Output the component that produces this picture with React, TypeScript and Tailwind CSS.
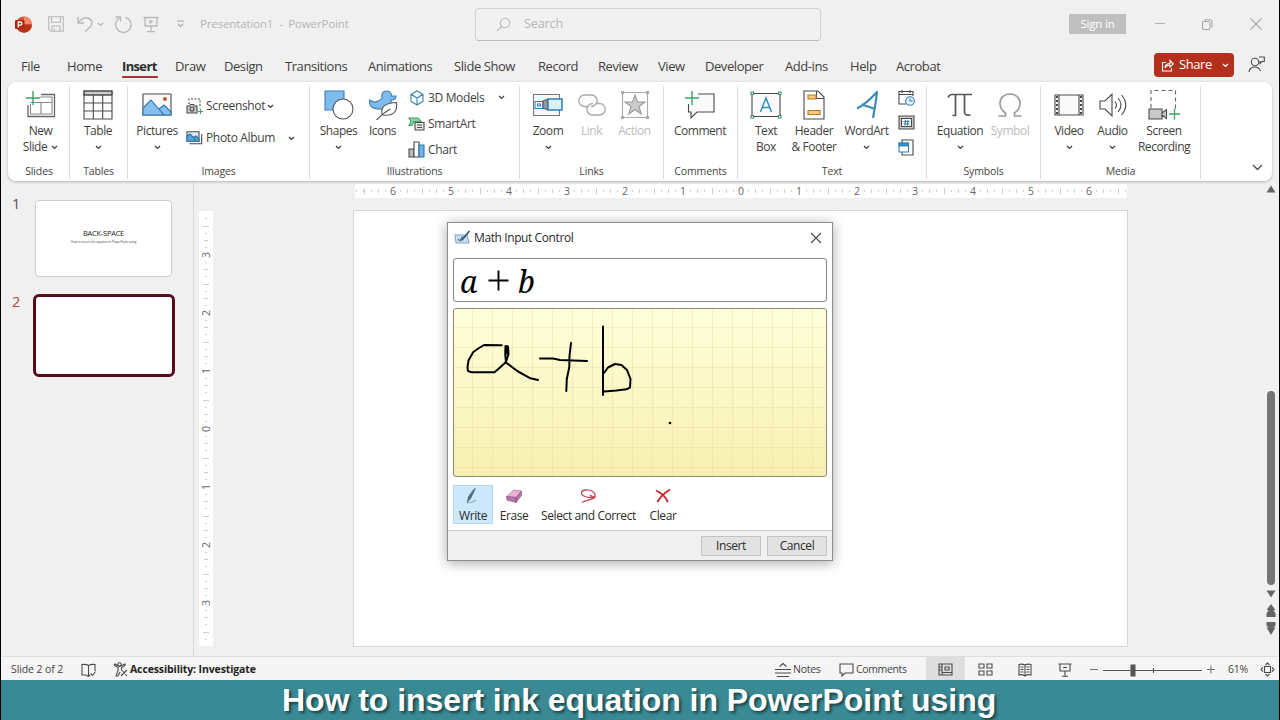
import React from 'react';

const TABS = [
    { label: 'File', width: 'w-[46px]' },
    { label: 'Home', width: 'w-[55px]' },
    { label: 'Insert', width: 'w-[53px]', active: true },
    { label: 'Draw', width: 'w-[49px]' },
    { label: 'Design', width: 'w-[61px]' },
    { label: 'Transitions', width: 'w-[83px]' },
    { label: 'Animations', width: 'w-[86px]' },
    { label: 'Slide Show', width: 'w-[84px]' },
    { label: 'Record', width: 'w-[60px]' },
    { label: 'Review', width: 'w-[60px]' },
    { label: 'View', width: 'w-[47px]' },
    { label: 'Developer', width: 'w-[80px]' },
    { label: 'Add-ins', width: 'w-[65px]' },
    { label: 'Help', width: 'w-[46px]' },
    { label: 'Acrobat', width: 'w-[50px]' },
];

const RULER_X = [6, 5, 4, 3, 2, 1, 0, 1, 2, 3, 4, 5, 6];
const RULER_Y = [3, 2, 1, 0, 1, 2, 3];

type IconProps = { size?: number; w?: number; h?: number; className?: string; children: React.ReactNode };

const Icon: React.FC<IconProps> = ({ size = 16, w, h, className = '', children }) => (
    <svg
        width={w ?? size}
        height={h ?? size}
        viewBox={`0 0 ${w ?? size} ${h ?? size}`}
        fill="none"
        stroke="#4a4a4a"
        strokeWidth="1.1"
        className={`shrink-0 ${className}`}
    >
        {children}
    </svg>
);

const Chevron: React.FC<{ className?: string }> = ({ className = '' }) => (
    <Icon w={7} h={5} className={className}>
        <path d="M1 1l2.5 2.4L6 1" stroke="currentColor" strokeWidth="1.3" />
    </Icon>
);

type GroupProps = { name: string; width: string; children: React.ReactNode };

const Group: React.FC<GroupProps> = ({ name, width, children }) => (
    <div className={`flex h-full shrink-0 flex-col ${width}`}>
        <div className="mt-1 flex h-[93px] flex-col border-r border-[#dcdcdc]">
            <div className="-ml-px flex h-[77px] shrink-0">{children}</div>
            <div className="h-4 text-center text-[10.5px] leading-4 tracking-[-0.15px] text-[#444]">{name}</div>
        </div>
    </div>
);

type BigProps = {
    icon: React.ReactNode;
    label: string;
    second?: string;
    arrow?: boolean;
    disabled?: boolean;
    width: string;
};

const BigButton: React.FC<BigProps> = ({ icon, label, second, arrow, disabled, width }) => (
    <div className={`flex shrink-0 flex-col items-center text-[12px] leading-4 tracking-[-0.45px] whitespace-nowrap ${width} ${disabled ? 'text-[#bcbcbc]' : 'text-[#3f3f3f]'}`}>
        <div className="flex h-[37px] items-center justify-center">{icon}</div>
        <span>{label}</span>
        <div className="flex h-4 items-center gap-1">
            {second && <span>{second}</span>}
            {arrow && <Chevron />}
        </div>
    </div>
);

const SmallButton: React.FC<{ icon: React.ReactNode; label: string; height: string; arrow?: string }> = ({ icon, label, height, arrow }) => (
    <div className={`flex items-center text-[12px] tracking-[-0.35px] whitespace-nowrap text-[#3f3f3f] ${height}`}>
        <div className="mr-[3px] flex w-[17px] justify-center">{icon}</div>
        {label}
        {arrow && <Chevron className={arrow} />}
    </div>
);

const TitleBar: React.FC = () => (
    <div className="flex h-12 shrink-0 items-center text-[11.5px] text-[#b6b6b6]">
        <Icon size={17} className="ml-[14px]">
            <circle cx="9" cy="8.5" r="8" fill="#d9502f" stroke="none" />
            <path d="M9 .5a8 8 0 018 8H9z" fill="#f08a6c" stroke="none" />
            <path d="M2 12.5a8 8 0 0014 0l1-4H9z" fill="#b93318" stroke="none" />
            <rect x="0" y="4" width="9.500" height="9" rx="1" fill="#b3260f" stroke="none" />
            <path d="M3.300 11.500V6h2a1.500 1.500 0 010 3.200h-2" stroke="#fff" strokeWidth="1.300" />
        </Icon>
        <Icon size={16} className="ml-4">
            <g stroke="#b8b8b8">
                <path d="M.7.7h14.6v14.6H2.800L.7 13.200zM3.500.7v5.500h9V.7M4 15.300V10h8v5.300M6.200 15v-2.500" />
            </g>
        </Icon>
        <Icon w={16} h={17} className="ml-[13px]">
            <path d="M1 1v6h6M1.300 6.700C5 2 9 1 12 2.500c4 2 3.500 6 1 8.500l-5 4.700" stroke="#b8b8b8" strokeWidth="1.400" />
        </Icon>
        <Chevron className="ml-1" />
        <Icon size={18} className="ml-[10px]">
            <path d="M1.500 2h5v4.500M11.500 2.300a7.700 7.700 0 11-6 .7" stroke="#b8b8b8" strokeWidth="1.300" />
        </Icon>
        <Icon w={16} h={17} className="ml-[11px]">
            <path d="M.5 1.500h15M2 1.500v8.500h12v-8.500M8 10v5.500M4 15.700h8" stroke="#b8b8b8" strokeWidth="1.300" />
            <path d="M6.500 3.500l4 2.200-4 2.300z" fill="#b8b8b8" stroke="none" />
        </Icon>
        <Icon w={9} h={8} className="ml-[17px]">
            <path d="M1 1h7M2 4l2.500 2.500L7 4" stroke="#a8a8a8" />
        </Icon>
        <span className="ml-[15px] w-[149px] tracking-[-0.14px] whitespace-pre">Presentation1  -  PowerPoint</span>
        <div className="mt-px ml-[126px] flex h-[33px] w-[346px] items-center rounded-[4px] border border-[#d2d2d2] border-b-[#bdbdbd] bg-[#f1f1f1]">
            <Icon size={15} className="ml-5">
                <circle cx="9" cy="6" r="4.700" stroke="#bbb" />
                <path d="M5.700 9.500L1 14.200" stroke="#bbb" />
            </Icon>
            <span className="ml-[13px] text-[12.5px] tracking-[-0.1px]">Search</span>
        </div>
        <div className="ml-[248px] flex h-[20px] w-[57px] items-center justify-center bg-[#bfbfbf] text-[11.5px] tracking-[-0.2px] text-white">Sign in</div>
        <Icon size={10} className="ml-[29px]"><path d="M0 4.500h10" stroke="#b0b0b0" /></Icon>
        <Icon size={11} className="ml-[37px]">
            <rect x=".5" y="2.500" width="7.500" height="8" rx="1.500" stroke="#a8a8a8" />
            <path d="M3 2.200V.7h5q2 0 2 2v5.800" stroke="#a8a8a8" />
        </Icon>
        <Icon size={12} className="ml-[37px]"><path d="M.5.5l11 11M11.500.5l-11 11" stroke="#a8a8a8" /></Icon>
    </div>
);

const TabBar: React.FC = () => (
    <div className="flex h-[34px] shrink-0 pl-5 text-[13px] tracking-[-0.43px] text-[#3f3f3f]">
        {TABS.map((tab) => (
            <div key={tab.label} className={`shrink-0 pt-[9px] leading-[18px] whitespace-nowrap ${tab.width}`}>
                {tab.active ? (
                    <span className="inline-block h-[21px] w-[36px] border-b-2 border-[#a4373a] font-bold tracking-[-0.65px] text-[#2b2b2b]">{tab.label}</span>
                ) : (
                    tab.label
                )}
            </div>
        ))}
        <div className="mt-[5px] ml-[208px] flex h-6 w-20 items-center rounded-[4px] bg-[#b5301c] text-white">
            <Icon size={13} className="ml-[7px]">
                <path d="M5 3.500H1.500v8.500h9V9M4 9c0-3 2-4.500 5-4.500V1.500L12.300 5 9 8V6C7 6 5 7 4 9z" stroke="#fff" />
            </Icon>
            <span className="ml-[5px] w-[34px]">Share</span>
            <Chevron className="ml-[9px]" />
        </div>
        <Icon size={17} className="mt-[8px] ml-[14px]">
            <circle cx="7" cy="6" r="3.700" />
            <path d="M1 16c0-3.500 3-5 6-5s4.500 1.500 5.500 4M11 1h5.300v4.500H14l-2 2V5" />
        </Icon>
    </div>
);

const Ribbon: React.FC = () => (
    <div className="relative z-10 mr-[7px] ml-[7px] flex h-[99px] shrink-0 rounded-lg bg-white shadow-[0_1px_3px_rgba(0,0,0,0.25)]">
        <Group name="Slides" width="w-[62px] pl-px">
            <BigButton width="w-[65px]" label="New" second="Slide" arrow icon={
                <Icon w={32} h={30}>
                    <path d="M16 4.500h13.500v22H3V15" stroke="#666" strokeWidth="1.300" />
                    <path d="M15 7h12v17H5.500V14M5.500 12.500H27M16 12.500V24" stroke="#888" />
                    <path d="M1 8h14M8 1v14" stroke="#3fa365" strokeWidth="1.400" />
                </Icon>
            } />
        </Group>
        <Group name="Tables" width="w-[58px]">
            <BigButton width="w-[58px]" label="Table" arrow icon={
                <Icon w={30} h={30}>
                    <path d="M1 1h28v4H1z" fill="#ccc" />
                    <path d="M1 1h28v28H1zM1 5h28M1 13h28M1 21h28M10.300 5v24M19.700 5v24" />
                </Icon>
            } />
        </Group>
        <Group name="Images" width="w-[182px]">
            <BigButton width="w-[60px]" label="Pictures" arrow icon={
                <Icon w={30} h={24}>
                    <path d="M1 1h28v21H1z" fill="#fafafa" />
                    <path d="M1 15l8-8 13 15H1zM17 16l5-4 7 7v3h-7z" fill="#83beec" stroke="#2f75a8" />
                    <circle cx="23" cy="6" r="2" fill="#d35230" stroke="none" />
                </Icon>
            } />
            <div className="-ml-px flex flex-col pt-1">
                <SmallButton height="h-8" label="Screenshot" arrow="ml-[2px]" icon={
                    <Icon w={17} h={16}>
                        <path d="M3 6V1h11v9" strokeDasharray="2 1.500" />
                        <path d="M1 8h2.500l1-1.500h3L8.500 8H11v7H1z" fill="#ccc" />
                        <circle cx="6" cy="11" r="2" />
                        <path d="M12 13.500h5M14.500 11v5" stroke="#3fa365" />
                    </Icon>
                } />
                <SmallButton height="h-[32px]" label="Photo Album" arrow="ml-[13px]" icon={
                    <Icon w={17} h={14}>
                        <path d="M1 .8h12v9.500H1z" fill="#d8ecfa" />
                        <path d="M1 5l3-2 5 5v2.300H1zM8 6l2-1 3 3v2.300H9z" fill="#5ba4d9" stroke="#2f75a8" />
                        <path d="M3.500 12.800h12.200V3" />
                    </Icon>
                } />
            </div>
        </Group>
        <Group name="Illustrations" width="w-[210px]">
            <BigButton width="w-[59px]" label="Shapes" arrow icon={
                <Icon w={30} h={30}>
                    <path d="M1 1h19v19H1z" fill="#7fbcec" stroke="#3b7fb4" />
                    <circle cx="19" cy="19" r="10" fill="#fff" stroke="#555" />
                </Icon>
            } />
            <BigButton width="w-[29px]" label="Icons" icon={
                <Icon w={30} h={30}>
                    <path d="M1.500 10c5 4 10 1 12.500-2-1-4 1-7 4.500-7 3 0 5 2 5 5H28c0 3-3 4-5 4 2 9-4 10-11 9-8 0-11-3-10.500-9z" fill="#7fbcec" stroke="#3b7fb4" />
                    <path d="M28.500 12.500c1 10-4 14-14 12.500-3-8 3-12 14-12.500zM8.500 30c4-4 8-8 14-11" fill="#fff" stroke="#555" />
                </Icon>
            } />
            <div className="ml-[11px] -mt-px flex flex-col">
                <SmallButton height="h-[25px]" label="3D Models" arrow="ml-[14px]" icon={
                    <Icon w={16} h={16}>
                        <path d="M8 1l6 3.300v7L8 15l-6-3.700v-7zM2 4.300L8 8l6-3.700M8 8v7" stroke="#3580b5" />
                    </Icon>
                } />
                <SmallButton height="h-[27px]" label="SmartArt" icon={
                    <Icon w={17} h={14}>
                        <path d="M1 1h9l3 3.500H6L4 8.500H1l2-4z" fill="#8fd3a5" stroke="#3fa365" />
                        <path d="M7 5.500h9v7.500H7z" fill="#e8e8e8" />
                        <path d="M9 8h5M9 10.500h5" />
                    </Icon>
                } />
                <SmallButton height="h-[25px]" label="Chart" icon={
                    <Icon w={17} h={17}>
                        <path d="M1 8h5v8H1z" fill="#bbb" />
                        <path d="M6 1h5v15H6z" fill="#fff" />
                        <path d="M11 4h5v12h-5z" fill="#6db3e8" stroke="#2f75a8" />
                    </Icon>
                } />
            </div>
        </Group>
        <Group name="Links" width="w-[144px]">
            <BigButton width="ml-[7px] w-[44px]" label="Zoom" arrow icon={
                <Icon w={32} h={24}>
                    <path d="M1.500 1.500h26v21h-26z" fill="#fafafa" stroke="#777" />
                    <path d="M3 8.500h8v7H3z" stroke="#3580b5" />
                    <path d="M5.500 11h3v2h-3z" stroke="#3580b5" />
                    <path d="M11 8l5-2v11l-5-2z" fill="#999" stroke="#555" />
                    <path d="M16 6h14v11H16z" fill="#d8f1fb" stroke="#2f80b5" strokeWidth="1.500" />
                </Icon>
            } />
            <BigButton width="w-[43px]" label="Link" disabled icon={
                <Icon w={28} h={22}>
                    <g stroke="#aaa" strokeWidth="1.300">
                        <path d="M9 12.500H6.500a5.700 5.700 0 010-11.500h7a5.700 5.700 0 014.500 9c-1.500 2-3 2.500-5 2.500" />
                        <path d="M19 9.500h2.500a5.700 5.700 0 010 11.500h-7a5.700 5.700 0 01-4.500-9c1.500-2 3-2.500 5-2.500" />
                    </g>
                </Icon>
            } />
            <BigButton width="w-[43px]" label="Action" disabled icon={
                <Icon w={30} h={30}>
                    <path d="M2.500 2.500h25v25h-25z" stroke="#aaa" />
                    <g fill="#aaa" stroke="none">
                        <path d="M1 1h3v3H1zM26 1h3v3h-3zM1 26h3v3H1zM26 26h3v3h-3z" />
                    </g>
                    <path d="M15 5l2.500 7H25l-6 4.500 2.300 7.500L15 19.500 8.700 24l2.300-7.500L5 12h7.500z" fill="#ccc" stroke="#999" />
                </Icon>
            } />
        </Group>
        <Group name="Comments" width="w-[74px]">
            <BigButton width="w-[74px]" label="Comment" icon={
                <Icon w={32} h={30}>
                    <path d="M14 4h16v18H13l-6 6v-6H4.500V14" fill="#fafafa" />
                    <path d="M1 8h14M8 1v14" stroke="#3fa365" strokeWidth="1.400" />
                </Icon>
            } />
        </Group>
        <Group name="Text" width="w-[189px]">
            <BigButton width="ml-[5px] w-[48px]" label="Text" second="Box" icon={
                <Icon w={32} h={28}>
                    <path d="M2 2.500h28v23H2z" fill="#fafafa" />
                    <g fill="#fff" stroke="#3d8e75"><path d="M1 1h2.500v2.500H1zM28.500 1H31v2.500h-2.500zM1 24.500h2.500V27H1zM28.500 24.500H31V27h-2.500z" /></g>
                    <path d="M10.500 21L16 7l5.500 14M12.500 16.500h7" stroke="#2f8cc0" strokeWidth="1.500" />
                </Icon>
            } />
            <BigButton width="w-[48px]" label="Header" second="& Footer" icon={
                <Icon w={22} h={30}>
                    <path d="M1 1h14l6 6v22H1z" fill="#fff" />
                    <path d="M13.500 1v7.500H21" />
                    <path d="M5 5h8v4H5zM5 20.500h12v4H5z" fill="#f9c97c" stroke="#b8761e" />
                </Icon>
            } />
            <BigButton width="w-[57px]" label="WordArt" arrow icon={
                <Icon w={26} h={30}>
                    <path d="M3 18.500Q12 14 23 2Q22 12 19 28M7.500 14.500Q14 16.500 21 19" stroke="#3a8db5" strokeWidth="2.200" strokeLinejoin="round" />
                </Icon>
            } />
            <div className="ml-[3px] flex w-4 flex-col items-center gap-[9px] pt-[3px]">
                <Icon w={17} h={17}>
                    <path d="M8 15H1V2.500h14V7M1 5.500h14M4 1v3M12 1v3" />
                    <circle cx="12" cy="12" r="4.300" fill="#e5f3fb" stroke="#3580b5" />
                    <path d="M12 9.500V12h2.500" stroke="#3580b5" />
                </Icon>
                <Icon w={17} h={15}>
                    <path d="M1 1h15v13H1z" fill="#ccc" />
                    <path d="M3.500 3.500h10v8h-10z" fill="#fff" />
                    <path d="M7.500 5L7 10.500M10 5l-.5 5.500M5.500 6.500h6M5.500 9h6" stroke="#3580b5" />
                </Icon>
                <Icon w={17} h={17}>
                    <path d="M4 4V1h11v15H4v-3" />
                    <path d="M1 4h9.500v9H1z" fill="#fff" stroke="#3580b5" />
                    <path d="M1 4h9.500v3H1z" fill="#3a8fc9" stroke="#3580b5" />
                </Icon>
            </div>
        </Group>
        <Group name="Symbols" width="w-[114px]">
            <BigButton width="ml-[9px] w-[50px]" label="Equation" arrow icon={
                <Icon w={26} h={26}>
                    <path d="M1 5.500C2 3 3 2.500 5 2.500h20M8.500 3v20.500H5.500M17.500 3v17c0 3 2 3.500 6 3" stroke="#555" strokeWidth="1.700" />
                </Icon>
            } />
            <BigButton width="w-[50px]" label="Symbol" disabled icon={
                <Icon w={26} h={26}>
                    <path d="M1.500 24h7v-3C4 18 3 14 3 11.500 3 6 7 2 13 2s10 4 10 9.500C23 14 22 18 17.500 21v3h7" stroke="#999" strokeWidth="1.600" />
                </Icon>
            } />
        </Group>
        <Group name="Media" width="w-[160px]">
            <BigButton width="ml-[7px] w-[44px]" label="Video" arrow icon={
                <Icon w={30} h={24}>
                    <path d="M1 2h28v20H1z" fill="#fafafa" />
                    <path d="M5 2v20M25 2v20" />
                    <path d="M3 3v18M27 3v18" strokeDasharray="2 2" strokeWidth="2" />
                </Icon>
            } />
            <BigButton width="w-[43px]" label="Audio" arrow icon={
                <Icon w={28} h={26}>
                    <path d="M1 9h5l7-7v22l-7-7H1z" fill="#fafafa" />
                    <path d="M16 9.500q3 3.500 0 7M19 6q6 7 0 14M22.500 3q8.500 10 0 20" />
                </Icon>
            } />
            <BigButton width="w-[60px]" label="Screen" second="Recording" icon={
                <Icon w={32} h={32}>
                    <path d="M3 19V1.500h24.500V20" strokeDasharray="4 3" stroke="#666" />
                    <path d="M1 20h13v10H1zM14 24l4.500-3.500v9L14 26z" fill="#c9c9c9" />
                    <path d="M21 25h11M26.500 19.500v11" stroke="#3fa365" strokeWidth="1.300" />
                </Icon>
            } />
        </Group>
        <Icon w={11} h={7} className="mt-[82px] mr-[9px] ml-auto">
            <path d="M1 1l4.500 4.500L10 1" strokeWidth="1.300" />
        </Icon>
    </div>
);

const Slides: React.FC = () => (
    <div className="flex w-[193px] shrink-0 flex-col border-r border-[#dadada] text-[14.5px]">
        <div className="mt-[19px] flex">
            <span className="-mt-[7px] ml-[11px] w-[23px] text-[#555]">1</span>
            <div className="flex h-[77px] w-[137px] flex-col items-center rounded-[4px] border border-[#cecece] bg-white">
                <span className="mt-[26px] text-[7.5px] leading-[13px] tracking-[-0.25px] text-[#222]">BACK-SPACE</span>
                <span className="text-[3px] leading-[5px] text-[#333]">How to insert ink equation in PowerPoint using</span>
            </div>
        </div>
        <div className="mt-[17px] flex">
            <span className="-mt-[3px] ml-[11px] w-[21px] text-[#b04a45]">2</span>
            <div className="h-[83px] w-[142px] rounded-[6px] border-[3px] border-[#5a0a1d] bg-white" />
        </div>
    </div>
);

const RulerX: React.FC = () => (
    <div className="flex h-[14px] w-[772px] justify-center bg-white">
        <svg width="9" height="14" stroke="#cfcfcf" className="shrink-0">
            <path d="M1.500 6v2M8.500 6v2" />
        </svg>
        {RULER_X.map((n, i) => (
            <div key={i} className="relative h-full w-[58px] shrink-0">
                <svg width="58" height="14" stroke="#cfcfcf" strokeWidth="1" className="absolute inset-0">
                    <path d="M.5 4v6M7.500 6v2M14.500 5v4M21.500 6v2M36.500 6v2M43.500 5v4M50.500 6v2" />
                </svg>
                <span className="block text-center text-[10.5px] leading-[14px] text-[#666]">{n}</span>
            </div>
        ))}
        <svg width="9" height="14" stroke="#cfcfcf" className="shrink-0">
            <path d="M.5 4v6M7.500 6v2" />
        </svg>
    </div>
);

const RulerY: React.FC = () => (
    <div className="flex h-[435px] w-[14px] flex-col justify-center bg-white">
        <svg width="14" height="14" stroke="#cfcfcf" className="shrink-0"><path d="M6 6.500h2" /></svg>
        {RULER_Y.map((n, i) => (
            <div key={i} className="relative flex h-[58px] w-full shrink-0 items-center justify-center">
                <svg width="14" height="58" stroke="#cfcfcf" strokeWidth="1" className="absolute inset-0">
                    <path d="M4 .5h6M6 7.500h2M5 14.500h4M6 21.500h2M6 36.500h2M5 43.500h4M6 50.500h2" />
                </svg>
                <span className="-rotate-90 text-[10.5px] leading-[14px] text-[#666]">{n}</span>
            </div>
        ))}
        <svg width="14" height="14" stroke="#cfcfcf" className="shrink-0"><path d="M4 .5h6M6 7.500h2" /></svg>
    </div>
);

const ToolButton: React.FC<{ icon: React.ReactNode; label: string; width: string; active?: boolean }> = ({ icon, label, width, active }) => (
    <div className={`flex h-[39px] flex-col items-center pt-[2px] whitespace-nowrap ${width} ${active ? 'border border-[#b5d9f0] bg-[#cce8fc]' : 'border border-transparent'}`}>
        {icon}
        <span className="mt-[2px] leading-[19px]">{label}</span>
    </div>
);

const MathDialog: React.FC = () => (
    <div className="absolute top-[222px] left-[446px] z-20 flex h-[339px] w-[386px] flex-col border border-[#8f8f8f] bg-white text-[12px] tracking-[-0.4px] text-[#2b2b2b] shadow-[0_2px_12px_rgba(0,0,0,0.35)]">
        <div className="flex h-[29px] shrink-0 items-center pl-[6px]">
            <Icon w={17} h={15}>
                <path d="M1 5h12l2 8H2z" fill="#c9dff0" stroke="#8aa5bb" />
                <path d="M4 9l2 2 2-4h3" stroke="#4a7aa5" />
                <path d="M7.500 10.500L15.500 1" stroke="#274a66" strokeWidth="1.500" />
            </Icon>
            <span className="ml-[3px]">Math Input Control</span>
            <Icon size={12} className="mr-[10px] ml-auto"><path d="M1 1l10 10M11 1L1 11" /></Icon>
        </div>
        <div className="mx-[5px] mt-[6px] flex h-[44px] shrink-0 items-center rounded-[3px] border border-[#858585] pt-[2px] pl-[6px] font-['Noto_Serif','Liberation_Serif',serif] text-[30px] tracking-normal text-black">
            <span className="w-[28px] italic">a</span>
            <Icon size={21} className="mb-px"><path d="M10.500.5v20M.5 10.500h20" stroke="#000" strokeWidth="1.900" /></Icon>
            <span className="ml-[9px] italic">b</span>
        </div>
        <div className="mx-[5px] mt-[6px] h-[169px] shrink-0 overflow-hidden rounded-[3px] border border-[#8b8973] bg-linear-to-b from-[#feffdb] to-[#f8f0b0]">
            <svg width="372" height="167" viewBox="454 309 372 167" fill="none">
                <defs>
                    <pattern id="grid" x="452" y="307" width="20" height="20" patternUnits="userSpaceOnUse">
                        <path d="M.5 0v20M0 .5h20" stroke="#e3d9a0" strokeOpacity=".38" />
                    </pattern>
                </defs>
                <rect x="454" y="309" width="372" height="167" fill="url(#grid)" />
                <g stroke="#000" strokeWidth="2" strokeLinecap="round" strokeLinejoin="round">
                    <path d="M501.700 345.300L484 345L479 348L473.300 352L468.500 360.500L467.500 367L468 371L471.500 372.300H494.500L500 367.500L506 362L508.500 354L508 346.500L505.500 346L505.200 354L506 362.500L518 371.500L530.500 378.300L538 380" />
                    <path d="M506.700 347.500v6" strokeWidth="2.500" />
                    <path d="M540 358.500L553 358.500L560 360L587 361M571 343L569.500 356L569.300 367L566.800 379L566.300 391" />
                    <path d="M603 326.500V395M604 373L608 367.500L615 364L621.500 365L627 370L630.500 379L630 387.500L626.500 389.300L616.500 390.600L604 391.600" />
                </g>
                <circle cx="670" cy="423" r="1.300" fill="#000" />
            </svg>
        </div>
        <div className="mt-[8px] ml-[5px] flex h-[45px] shrink-0">
            <ToolButton active label="Write" width="w-[40px]" icon={
                <Icon w={16} h={16} className="-ml-1">
                    <path d="M12.500.5L8 10l-4 5 1.500-6.500L11 1z" fill="#4a6b87" stroke="#38546b" strokeWidth=".4" />
                    <path d="M4 15q5 0 9-3" stroke="#9ab" />
                </Icon>
            } />
            <ToolButton label="Erase" width="w-[42px]" icon={
                <Icon w={16} h={16}>
                    <path d="M.5 8.500L8 2l7.500 1L10 9.500z" fill="#e6b3d3" stroke="#a8709a" strokeWidth=".7" />
                    <path d="M.5 8.500l9.500 1v5L1 12zM10 9.500L15.500 3v4.500L10 14.500z" fill="#b575a5" stroke="#8e5580" strokeWidth=".7" />
                </Icon>
            } />
            <ToolButton label="Select and Correct" width="w-[107px]" icon={
                <Icon w={17} h={16}>
                    <path d="M15 9c1-5-5-8-10-7C0 3 .5 7 5 8.500s9 1 10.500-.5M10 7c2 2 3.500 2.500 5.500 1.500C12 13 7 11 2 14.500" stroke="#c4475a" strokeWidth="1.300" />
                </Icon>
            } />
            <ToolButton label="Clear" width="w-[42px]" icon={
                <Icon w={16} h={16}>
                    <path d="M1 2.500Q9 6 13 14M15 1.500Q6 7 2.500 14" stroke="#c8262c" strokeWidth="1.900" />
                </Icon>
            } />
        </div>
        <div className="flex flex-1 items-center justify-end gap-[6px] border-t border-[#cfcfcf] bg-[#f0f0f0] pr-[5px]">
            <div className="flex h-[20px] w-[60px] items-center justify-center border border-[#c2c2c2] bg-[#e2e2e2]">Insert</div>
            <div className="flex h-[20px] w-[60px] items-center justify-center border border-[#c2c2c2] bg-[#e2e2e2]">Cancel</div>
        </div>
    </div>
);

const ScrollBar: React.FC = () => (
    <div className="ml-auto flex w-[16px] flex-col items-center">
        <Icon w={10} h={8} className="mt-[4px]"><path d="M5 .5L9.500 7.500h-9z" fill="#666" stroke="none" /></Icon>
        <div className="mt-[198px] h-[194px] w-[8px] rounded-full bg-[#757575]" />
        <Icon w={10} h={8} className="mt-[5px]"><path d="M.5.5h9L5 7.500z" fill="#666" stroke="none" /></Icon>
        <Icon w={10} h={13} className="mt-[6px]"><path d="M5 0l4.500 6H7.500l2 3.500V13h-9V9.500l2-3.500H.5z" fill="#666" stroke="none" /></Icon>
        <Icon w={10} h={13} className="mt-[5px]"><path d="M.5 0h9v3.500l-2 2h2L5 13 .5 5.500h2l-2-2z" fill="#666" stroke="none" /></Icon>
    </div>
);

const StatusBar: React.FC = () => (
    <div className="flex h-6 shrink-0 items-center border-t border-[#dedede] bg-[#f5f5f5] pt-[2px] text-[10.5px] tracking-[-0.1px] whitespace-nowrap text-[#444]">
        <span className="ml-[10px] w-[70px]">Slide 2 of 2</span>
        <Icon w={15} h={14}>
            <path d="M7.500 2.500v10M7.500 2.500Q5 1 1 1.500V12h4l2.500 1.500L9 12M7.500 2.500Q10 1 14 1.500V8M9.500 10.500l2 2 3-4" />
        </Icon>
        <Icon w={15} h={15} className="ml-[17px]">
            <circle cx="6.500" cy="2.500" r="1.700" />
            <path d="M1 3l4 2.500v3L3 14h2l2-4M12.500 3L8.500 5.500V8M1 3l1-1 4.500 2.500L12 2l.5 1M8.500 8l5.500 6M14 8l-6 6" />
        </Icon>
        <span className="ml-[2px] w-[127px] font-bold tracking-[-0.12px] text-[#222]">Accessibility: Investigate</span>
        <Icon w={16} h={16} className="ml-[518px]"><path d="M0 7.500h16M0 11h16M2 14.500h12M4.500 4.500L8 1.500l3.500 3" /></Icon>
        <span className="ml-[2px] w-[28px] tracking-[-0.25px]">Notes</span>
        <Icon w={15} h={14} className="ml-[18px]"><path d="M1 1h13v9H6l-3 3v-3H1z" /></Icon>
        <span className="ml-[2px] w-[52px] tracking-[-0.35px]">Comments</span>
        <div className="-mt-[2px] ml-[18px] flex h-[23px] w-[39px] items-center justify-center bg-[#dedede] pt-[2px]">
            <Icon w={15} h={13}><path d="M1 1h13v11H1zM4 1v11M7 4h4v3H7zM4 9.500h10M1 4h3M1 7h3" /></Icon>
        </div>
        <Icon w={15} h={13} className="ml-[13px]"><path d="M1 1h5v4H1zM9 1h5v4H9zM1 8h5v4H1zM9 8h5v4H9z" /></Icon>
        <Icon w={14} h={14} className="ml-[25px]">
            <path d="M7 2Q4 .5 1 1.500V12q3-1 6 1 3-2 6-1V1.500Q10 .5 7 2v11M2.500 4h3M2.500 6.500h3M2.500 9h3M8.500 4h3M8.500 6.500h3M8.500 9h3" />
        </Icon>
        <Icon w={14} h={14} className="ml-[26px]"><path d="M.5 1h13M2 1v7h10V1M7 8v5M4 13.300h6M5 4.500h4" /></Icon>
        <Icon size={9} className="ml-[18px]"><path d="M0 4.500h8" stroke="#777" /></Icon>
        <Icon w={100} h={14} className="ml-[4px]">
            <path d="M0 7.500h99M50.500 5v5" stroke="#555" />
            <rect x="27.500" y="1.500" width="5" height="12" fill="#555" stroke="none" />
        </Icon>
        <Icon size={9} className="ml-[4px]"><path d="M0 4.500h8M4 .5v8" stroke="#777" /></Icon>
        <span className="ml-[12px] w-[22px] tracking-[-0.2px]">61%</span>
        <Icon w={15} h={15} className="ml-[10px]">
            <path d="M4.500 4.500h6v6h-6zM5.500 3l2-2 2 2M5.500 12l2 2 2-2M3 5.500l-2 2 2 2M12 5.500l2 2-2 2" />
        </Icon>
    </div>
);

const App: React.FC = () => (
    <div className="relative flex h-[720px] w-[1280px] flex-col overflow-hidden border-x border-black bg-[#f0f0f0] font-['Open_Sans','Noto_Sans',sans-serif]">
        <TitleBar />
        <TabBar />
        <Ribbon />
        <div className="flex min-h-0 flex-1">
            <Slides />
            <div className="mt-[30px] ml-[5px]">
                <RulerY />
            </div>
            <div className="ml-[140px] flex flex-col pt-[3px]">
                <div className="ml-[2px]">
                    <RulerX />
                </div>
                <div className="mt-[12px] h-[437px] w-[775px] border border-[#d6d6d6] bg-white" />
            </div>
            <ScrollBar />
        </div>
        <StatusBar />
        <div className="flex h-10 shrink-0 items-center bg-[#398a94] pl-[281px] font-['Liberation_Sans',sans-serif] text-[32px] leading-none font-bold tracking-[-0.05px] whitespace-nowrap text-white [text-shadow:2px_2px_3px_rgba(0,0,0,0.55)]">
            How to insert ink equation in PowerPoint using
        </div>
        <MathDialog />
    </div>
);

export default App;
